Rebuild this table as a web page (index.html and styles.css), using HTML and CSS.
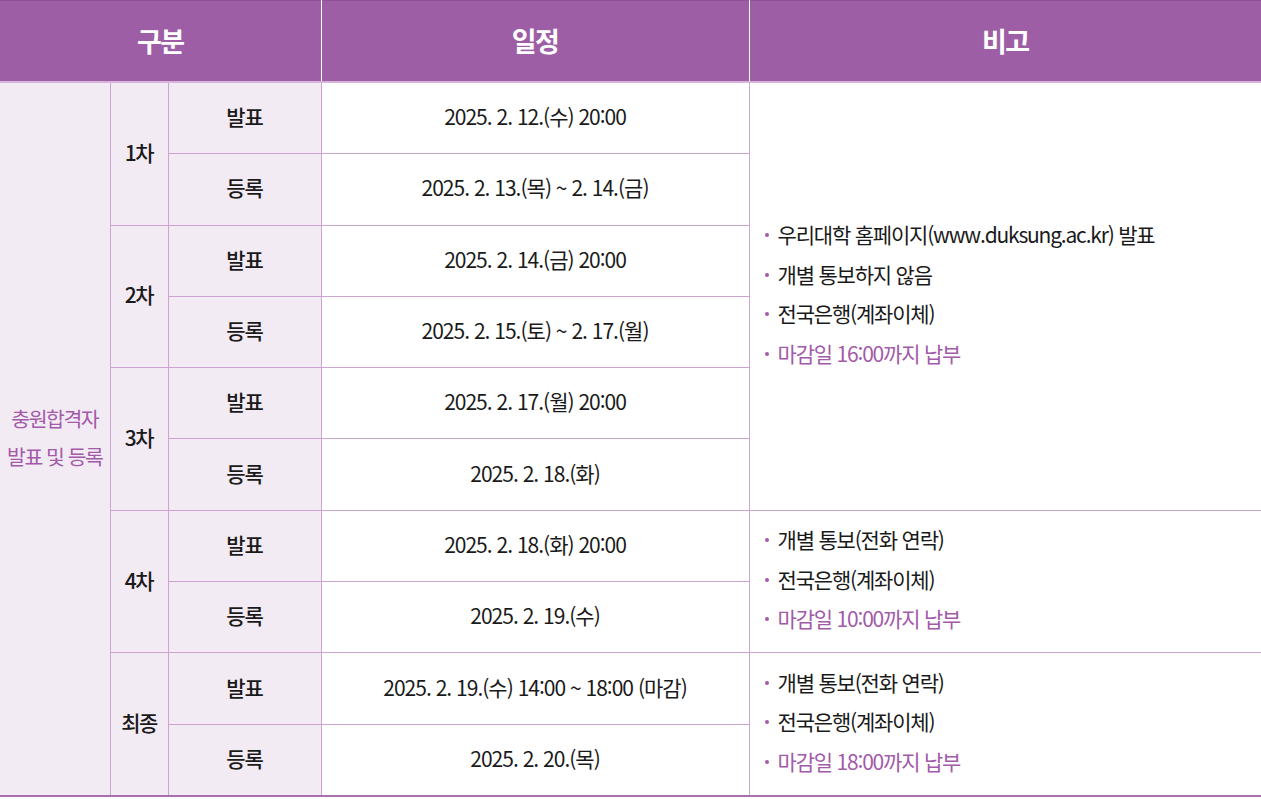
FILE: index.html
```html
<!DOCTYPE html>
<html lang="ko">
<head>
<meta charset="utf-8">
<link rel="stylesheet" href="styles.css">
</head>
<body>
<table class="sched">
  <colgroup>
    <col class="c1"><col class="c2"><col class="c3"><col class="c4"><col class="c5">
  </colgroup>
  <thead>
    <tr>
      <th colspan="3">구분</th>
      <th>일정</th>
      <th>비고</th>
    </tr>
  </thead>
  <tbody>
    <tr>
      <td rowspan="10" class="cat">충원합격자<br>발표 및 등록</td>
      <td rowspan="2" class="round">1차</td>
      <td class="kind">발표</td>
      <td class="date">2025. 2. 12.(수) 20:00</td>
      <td rowspan="6" class="note">
        <ul>
          <li>우리대학 홈페이지(www.duksung.ac.kr) 발표</li>
          <li>개별 통보하지 않음</li>
          <li>전국은행(계좌이체)</li>
          <li class="hl">마감일 16:00까지 납부</li>
        </ul>
      </td>
    </tr>
    <tr>
      <td class="kind">등록</td>
      <td class="date">2025. 2. 13.(목) ~ 2. 14.(금)</td>
    </tr>
    <tr>
      <td rowspan="2" class="round">2차</td>
      <td class="kind">발표</td>
      <td class="date">2025. 2. 14.(금) 20:00</td>
    </tr>
    <tr>
      <td class="kind">등록</td>
      <td class="date">2025. 2. 15.(토) ~ 2. 17.(월)</td>
    </tr>
    <tr>
      <td rowspan="2" class="round">3차</td>
      <td class="kind">발표</td>
      <td class="date">2025. 2. 17.(월) 20:00</td>
    </tr>
    <tr>
      <td class="kind">등록</td>
      <td class="date">2025. 2. 18.(화)</td>
    </tr>
    <tr>
      <td rowspan="2" class="round">4차</td>
      <td class="kind">발표</td>
      <td class="date">2025. 2. 18.(화) 20:00</td>
      <td rowspan="2" class="note">
        <ul>
          <li>개별 통보(전화 연락)</li>
          <li>전국은행(계좌이체)</li>
          <li class="hl">마감일 10:00까지 납부</li>
        </ul>
      </td>
    </tr>
    <tr>
      <td class="kind">등록</td>
      <td class="date">2025. 2. 19.(수)</td>
    </tr>
    <tr>
      <td rowspan="2" class="round">최종</td>
      <td class="kind">발표</td>
      <td class="date">2025. 2. 19.(수) 14:00 ~ 18:00 (마감)</td>
      <td rowspan="2" class="note">
        <ul>
          <li>개별 통보(전화 연락)</li>
          <li>전국은행(계좌이체)</li>
          <li class="hl">마감일 18:00까지 납부</li>
        </ul>
      </td>
    </tr>
    <tr>
      <td class="kind">등록</td>
      <td class="date">2025. 2. 20.(목)</td>
    </tr>
  </tbody>
</table>
</body>
</html>
```

FILE: styles.css
```css
html, body {
  margin: 0;
  padding: 0;
  background: #ffffff;
}

body {
  font-family: "Noto Sans CJK KR", "Noto Sans", sans-serif;
  color: #1a1a1a;
}

.sched {
  width: 1261px;
  table-layout: fixed;
  border-collapse: collapse;
  border-top: 1px solid #8d4f95;
  border-bottom: 2px solid #a970b0;
}

.c1 { width: 110px; }
.c2 { width: 58px; }
.c3 { width: 153px; }
.c4 { width: 428px; }
.c5 { width: 512px; }

.sched th {
  height: 78px;
  padding: 0 0 2px;
  background: #9e5ea5;
  color: #ffffff;
  font-size: 27px;
  font-weight: 700;
  letter-spacing: -1.5px;
  border-left: 1px solid #ffffff;
  border-right: 1px solid #ffffff;
  border-bottom: 1px solid #ffffff;
}

.sched th:first-child { border-left: none; }
.sched th:last-child { border-right: none; }

.sched thead tr {
  border-bottom: 2px solid #d7b5db;
}

.sched td {
  height: 66.3px;
  padding: 0 0 4px;
  border: 1px solid #cda3d1;
  text-align: center;
  vertical-align: middle;
  font-size: 21px;
  letter-spacing: -1px;
}

.sched td:last-child { border-right: none; }
.sched td.cat { border-left: none; }

.sched td.cat {
  background: #f3ebf4;
  color: #a25aa9;
  font-size: 20.5px;
  line-height: 38px;
  letter-spacing: -1.5px;
}

.sched td.round {
  background: #f3ebf4;
  font-weight: 500;
  font-size: 21px;
  letter-spacing: -1.5px;
}

.sched td.kind {
  background: #f3ebf4;
  font-weight: 500;
  letter-spacing: -1px;
}

.sched td.date {
  background: #ffffff;
  font-size: 21px;
  letter-spacing: -1px;
}

.sched td.note {
  background: #ffffff;
  text-align: left;
}

.note ul {
  list-style: none;
  margin: 0;
  padding: 0 0 0 15px;
}

.note li {
  position: relative;
  padding-left: 13px;
  font-size: 21px;
  line-height: 39.5px;
  letter-spacing: -1.2px;
}

.note li::before {
  content: "";
  position: absolute;
  left: 0;
  top: 18px;
  width: 4px;
  height: 4px;
  border-radius: 50%;
  background: #a25aa9;
}

.note li.hl {
  color: #a25aa9;
}
```
